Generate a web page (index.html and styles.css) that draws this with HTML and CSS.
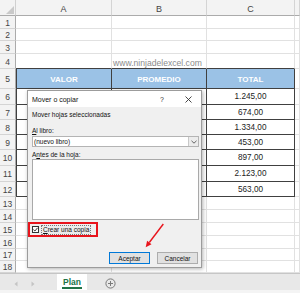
FILE: index.html
```html
<!DOCTYPE html>
<html lang="es">
<head>
<meta charset="utf-8">
<title>Mover o copiar</title>
<link rel="stylesheet" href="styles.css">
</head>
<body>
<div class="sheet">
  <div class="corner"><span class="tri"></span></div><div class="ch">A</div><div class="ch">B</div><div class="ch">C</div><div class="ch"></div>

  <div class="rh">1</div><div class="c"></div><div class="c"></div><div class="c"></div><div class="c"></div>
  <div class="rh">2</div><div class="c"></div><div class="c"></div><div class="c"></div><div class="c"></div>
  <div class="rh">3</div><div class="c"></div><div class="c"></div><div class="c"></div><div class="c"></div>
  <div class="rh">4</div><div class="c tb"></div><div class="c tb wm">www.ninjadelexcel.com</div><div class="c tb"></div><div class="c"></div>
  <div class="rh">5</div><div class="c th tl">VALOR</div><div class="c th">PROMEDIO</div><div class="c th">TOTAL</div><div class="c"></div>
  <div class="rh">6</div><div class="c t tl"></div><div class="c t"></div><div class="c t">1.245,00</div><div class="c"></div>
  <div class="rh">7</div><div class="c t tl"></div><div class="c t"></div><div class="c t">674,00</div><div class="c"></div>
  <div class="rh">8</div><div class="c t tl"></div><div class="c t"></div><div class="c t">1.334,00</div><div class="c"></div>
  <div class="rh">9</div><div class="c t tl"></div><div class="c t"></div><div class="c t">453,00</div><div class="c"></div>
  <div class="rh">10</div><div class="c t tl"></div><div class="c t"></div><div class="c t">897,00</div><div class="c"></div>
  <div class="rh">11</div><div class="c t tl"></div><div class="c t"></div><div class="c t">2.123,00</div><div class="c"></div>
  <div class="rh">12</div><div class="c t tl"></div><div class="c t"></div><div class="c t">563,00</div><div class="c"></div>
  <div class="rh">13</div><div class="c"></div><div class="c"></div><div class="c"></div><div class="c"></div>
  <div class="rh">14</div><div class="c"></div><div class="c"></div><div class="c"></div><div class="c"></div>
  <div class="rh">15</div><div class="c"></div><div class="c"></div><div class="c"></div><div class="c"></div>
  <div class="rh">16</div><div class="c"></div><div class="c"></div><div class="c"></div><div class="c"></div>
  <div class="rh">17</div><div class="c"></div><div class="c"></div><div class="c"></div><div class="c"></div>
  <div class="rh">18</div><div class="c"></div><div class="c"></div><div class="c"></div><div class="c"></div>
</div>

<div class="tabs">
  <svg class="nav" width="50" height="16" viewBox="0 0 50 16">
    <polygon points="14.5,10 17.5,7.5 17.5,12.5" fill="#c4c4c4"/>
    <polygon points="34.5,10 31.5,7.5 31.5,12.5" fill="#c4c4c4"/>
  </svg>
  <div class="tab"><span class="tabtext">Plan</span></div>
  <svg class="plus" width="11" height="11" viewBox="0 0 11 11">
    <circle cx="5.5" cy="5.5" r="4.6" fill="none" stroke="#7a7a7a" stroke-width="1"/>
    <path d="M5.5 3v5M3 5.5h5" stroke="#7a7a7a" stroke-width="1"/>
  </svg>
</div>

<div class="dialog">
  <div class="titlebar">
    <span class="title">Mover o copiar</span>
    <span class="tbtn">?</span>
    <span class="tbtn"><svg width="7" height="7" viewBox="0 0 7 7"><path d="M0.5 0.5L6.5 6.5M6.5 0.5L0.5 6.5" stroke="#333" stroke-width="0.9"/></svg></span>
  </div>
  <div class="dbody">
    <div class="lbl first">Mover hojas seleccionadas</div>
    <div class="lbl l2"><u>A</u>l libro:</div>
    <div class="combo">
      <span class="val">(nuevo libro)</span>
      <span class="drop"><svg width="6" height="4" viewBox="0 0 6 4"><path d="M0.5 0.8L3 3.2L5.5 0.8" fill="none" stroke="#555" stroke-width="0.9"/></svg></span>
    </div>
    <div class="lbl l3">A<u>n</u>tes de la hoja:</div>
    <div class="list"></div>
    <div class="redbox">
      <span class="chk"><svg width="5" height="5" viewBox="0 0 5 5"><path d="M0.4 2.6L1.9 4L4.6 0.8" fill="none" stroke="#222" stroke-width="0.9"/></svg></span>
      <span class="clabel"><u>C</u>rear una copia</span>
    </div>
    <div class="btns">
      <span class="btn ok">Aceptar</span>
      <span class="btn">Cancelar</span>
    </div>
  </div>
</div>

<svg class="arrow" width="300" height="293" viewBox="0 0 300 293">
  <line x1="163.3" y1="224" x2="149.3" y2="242.5" stroke="#e8141c" stroke-width="1.4"/>
  <polygon points="145.7,247.3 151.5,244.2 147.1,240.8" fill="#e8141c"/>
</svg>
</body>
</html>
```

FILE: styles.css
```css
* { box-sizing: border-box; }

body {
  margin: 0;
  width: 300px;
  height: 293px;
  overflow: hidden;
  position: relative;
  background: #fff;
  font-family: "Liberation Sans", Arial, sans-serif;
}

.sheet {
  display: grid;
  grid-template-columns: 16px 96px 95px 88px 5px;
  grid-template-rows: 16px 13px 12px 13px 15px 20px 16px 15px 15px 15px 16px 16px 15px 13px 13px 13px 13px 12px 12px;
}

.corner {
  background: #f3f3f3;
  border-right: 1px solid #d0d0d0;
  border-bottom: 1px solid #ababab;
  position: relative;
  display: flex;
  align-items: flex-end;
  justify-content: flex-end;
  padding: 0 1px 1px 0;
}

.tri {
  width: 0;
  height: 0;
  border-left: 8px solid transparent;
  border-bottom: 8px solid #c9c9c9;
}

.ch {
  background: #f3f3f3;
  border-right: 1px solid #d4d4d4;
  border-bottom: 1px solid #ababab;
  font-size: 9px;
  color: #444;
  display: flex;
  align-items: center;
  justify-content: center;
  padding-top: 2px;
}

.rh {
  background: #f3f3f3;
  border-right: 1px solid #ababab;
  border-bottom: 1px solid #d4d4d4;
  font-size: 8.5px;
  color: #444;
  display: flex;
  align-items: center;
  justify-content: center;
  padding-top: 1px;
}

.c {
  border-right: 1px solid #e1e1e1;
  border-bottom: 1px solid #e1e1e1;
  font-size: 8.2px;
  color: #222;
  display: flex;
  align-items: center;
  justify-content: center;
  white-space: nowrap;
}

.tb { border-bottom-color: #404040; }

.t {
  border-right-color: #404040;
  border-bottom-color: #404040;
}

.tl { border-left: 1px solid #404040; }

.th {
  background: #9bc2e6;
  color: #fff;
  font-weight: bold;
  font-size: 8px;
  border-right-color: #404040;
  border-bottom-color: #404040;
  padding-top: 1px;
}

.wm {
  justify-content: flex-start;
  align-items: flex-end;
  color: #8c8c8c;
  font-size: 8.6px;
  padding-left: 1px;
  padding-bottom: 0;
  overflow: visible;
}

/* sheet tabs */
.tabs {
  display: flex;
  align-items: flex-start;
  height: 20px;
  background: #e8e8e8;
  border-top: 1px solid #c6c6c6;
  border-bottom: 3px solid #f4f4f4;
}

.nav { display: block; }

.tab {
  margin-left: 7px;
  width: 30px;
  height: 16px;
  background: #fff;
  display: flex;
  justify-content: center;
  align-items: flex-start;
  padding-top: 3px;
}

.tabtext {
  color: #217346;
  font-weight: bold;
  font-size: 8.5px;
  line-height: 10px;
  border-bottom: 2px solid #217346;
  padding: 0 1px;
}

.plus {
  margin-left: 18px;
  margin-top: 4px;
}

/* dialog */
.dialog {
  position: absolute;
  left: 27px;
  top: 90px;
  width: 175px;
  height: 178px;
  background: #f0f0f0;
  border: 1px solid #9c9c9c;
  box-shadow: 1px 1px 4px rgba(0, 0, 0, 0.3);
  display: flex;
  flex-direction: column;
  color: #000;
}

.titlebar {
  height: 16px;
  background: #fff;
  display: flex;
  align-items: center;
  padding-left: 4px;
}

.title {
  flex: 1;
  font-size: 7px;
  color: #111;
}

.tbtn {
  width: 26px;
  display: flex;
  justify-content: center;
  align-items: center;
  font-size: 7px;
  color: #333;
}

.dbody {
  padding: 0 2px 0 4px;
  display: flex;
  flex-direction: column;
}

.lbl {
  font-size: 6.5px;
  line-height: 10px;
  color: #111;
}

.first { margin-top: 3px; }
.l2 { margin-top: 6px; }
.l3 { margin-top: 3px; line-height: 9px; }

.combo {
  height: 11px;
  background: #fff;
  border: 1px solid #b4b4b4;
  display: flex;
  align-items: stretch;
}

.val {
  flex: 1;
  font-size: 6.5px;
  line-height: 9px;
  padding-left: 1px;
  color: #111;
}

.drop {
  width: 10px;
  background: #ececec;
  border-left: 1px solid #c8c8c8;
  display: flex;
  align-items: center;
  justify-content: center;
}

.list {
  height: 61px;
  background: #fff;
  border: 1px solid #a9a9a9;
}

.redbox {
  margin-top: 2px;
  margin-left: -4px;
  width: 70px;
  height: 15px;
  border: 2px solid #e8141c;
  display: flex;
  align-items: center;
  padding-left: 2px;
}

.chk {
  width: 7px;
  height: 7px;
  border: 1px solid #333;
  background: #fff;
  display: flex;
  align-items: center;
  justify-content: center;
}

.clabel {
  margin-left: 2px;
  border: 1px dotted #777;
  background: #ececec;
  font-size: 6.5px;
  line-height: 8px;
  padding: 0 1px;
  color: #111;
}

.btns {
  margin-top: 15px;
  display: flex;
  justify-content: flex-end;
  gap: 7px;
  padding-right: 1px;
}

.btn {
  width: 41px;
  height: 12px;
  background: #e1e1e1;
  border: 1px solid #adadad;
  font-size: 6.5px;
  display: flex;
  align-items: center;
  justify-content: center;
  color: #111;
}

.btn.ok { border-color: #0078d7; }

.arrow {
  position: absolute;
  left: 0;
  top: 0;
  pointer-events: none;
}
```
